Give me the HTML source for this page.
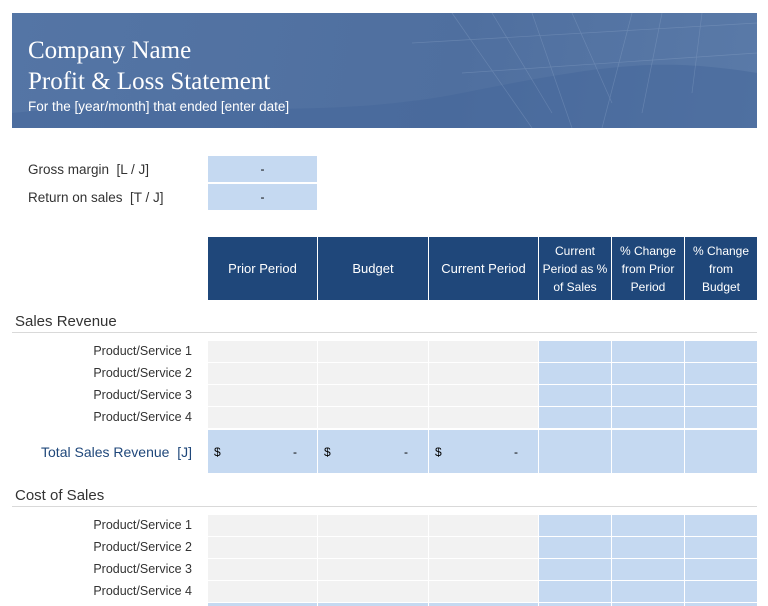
<!DOCTYPE html><html><head><style>
body{margin:0;width:768px;height:606px;background:#fff;position:relative;overflow:hidden;font-family:"Liberation Sans",sans-serif;}
.a{position:absolute}
.ban{left:12px;top:13px;width:745px;height:115px;background:linear-gradient(100deg,#5475a5 0%,#4f6f9f 60%,#5a7aa8 100%);overflow:hidden}
.t{color:#fff;font-family:"Liberation Serif",serif;font-size:25px;left:16px}
.lbl{font-size:12.5px;color:#333;text-align:right;width:180px;left:12px}
.c{background:#f2f2f2}.b{background:#c5d9f1}
.h{background:#1f477a;color:#fff;font-size:13px;display:flex;align-items:center;justify-content:center;text-align:center;line-height:18px;top:237px;height:63px}
.sec{left:15px;font-size:15px;color:#333}
.ln{left:12px;width:745px;height:1px;background:#d9d9d9}
</style></head><body>
<div class="a ban">
<svg width="745" height="115" style="position:absolute;left:0;top:0"><path d="M0 100 C150 85 300 110 450 80 S650 45 745 60 L745 115 L0 115Z" fill="#43669a" opacity=".5"/>
<g stroke="#9ab1d1" stroke-width=".7" opacity=".3"><line x1="440" y1="0" x2="520" y2="115"/><line x1="480" y1="0" x2="540" y2="100"/><line x1="520" y1="0" x2="560" y2="115"/><line x1="560" y1="0" x2="600" y2="90"/><line x1="620" y1="0" x2="590" y2="115"/><line x1="650" y1="0" x2="630" y2="100"/><line x1="690" y1="0" x2="680" y2="80"/><line x1="400" y1="30" x2="745" y2="10"/><line x1="450" y1="60" x2="745" y2="40"/></g></svg>
<div class="a t" style="top:24px">Company Name</div>
<div class="a t" style="top:55px">Profit &amp; Loss Statement</div>
<div class="a" style="left:16px;top:86px;color:#fff;font-size:13.5px">For the [year/month] that ended [enter date]</div>
</div>
<div class="a" style="left:28px;top:162px;font-size:13.5px;color:#333">Gross margin&nbsp; [L / J]</div>
<div class="a" style="left:28px;top:190px;font-size:13.5px;color:#333">Return on sales&nbsp; [T / J]</div>
<div class="a b" style="left:208px;top:156px;width:109px;height:26px;text-align:center;line-height:26px;font-size:12px">-</div>
<div class="a b" style="left:208px;top:184px;width:109px;height:26px;text-align:center;line-height:26px;font-size:12px">-</div>
<div class="a h" style="left:208px;width:109px">Prior Period</div>
<div class="a h" style="left:318px;width:110px">Budget</div>
<div class="a h" style="left:429px;width:109px">Current Period</div>
<div class="a h" style="left:539px;width:72px;font-size:12px">Current<br>Period as %<br>of Sales</div>
<div class="a h" style="left:612px;width:72px;font-size:12px">% Change<br>from Prior<br>Period</div>
<div class="a h" style="left:685px;width:72px;font-size:12px">% Change<br>from<br>Budget</div>
<div class="a sec" style="top:313px">Sales Revenue</div><div class="a ln" style="top:332px"></div>
<div class="a sec" style="top:487px">Cost of Sales</div><div class="a ln" style="top:506px"></div>
<div id="g"></div>
<script>
var g='',cols=[[208,109],[318,110],[429,109],[539,72],[612,72],[685,72]];
function rows(y0){for(var r=0;r<4;r++){var y=y0+r*22;g+='<div class="a lbl" style="top:'+(y+3)+'px">Product/Service '+(r+1)+'</div>';cols.forEach(function(c,i){g+='<div class="a '+(i<3?'c':'b')+'" style="left:'+c[0]+'px;top:'+y+'px;width:'+c[1]+'px;height:21px"></div>'})}}
rows(341);rows(515);
var y=430;g+='<div class="a lbl" style="top:'+(y+14)+'px;color:#1f477a;font-size:14px">Total Sales Revenue&nbsp; [J]</div>';
cols.forEach(function(c,i){g+='<div class="a b" style="left:'+c[0]+'px;top:'+y+'px;width:'+c[1]+'px;height:43px;font-size:12px">'+(i<3?'<span class="a" style="left:6px;top:15px">$</span><span class="a" style="right:20px;top:15px">-</span>':'')+'</div>'});
cols.forEach(function(c){g+='<div class="a b" style="left:'+c[0]+'px;top:603px;width:'+c[1]+'px;height:3px"></div>'});
document.getElementById('g').innerHTML=g;
</script>
</body></html>
